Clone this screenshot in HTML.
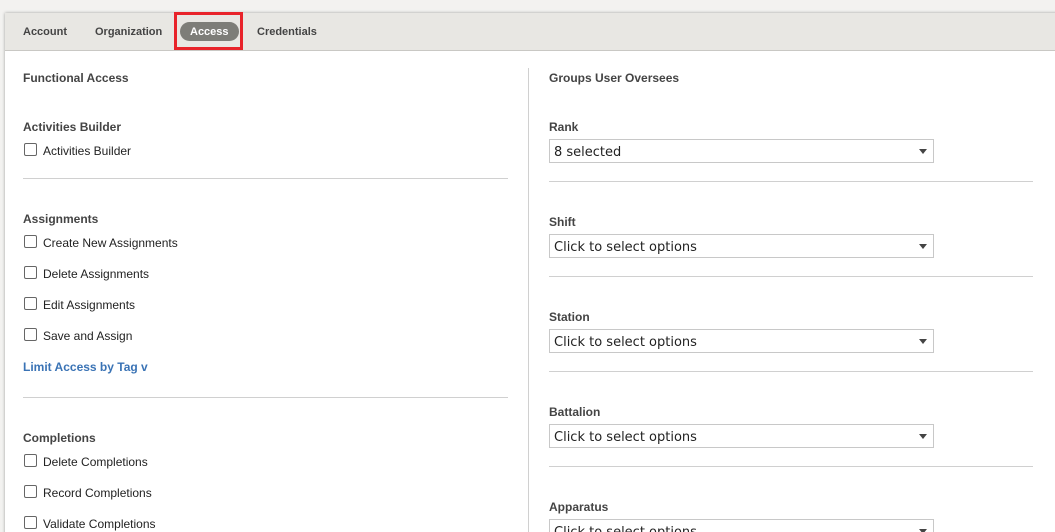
<!DOCTYPE html><html style="overflow:hidden"><head><style>
html,body{width:1055px;height:532px;overflow:hidden}
body{margin:0;background:#f3f2f0;font-family:"Liberation Sans",Arial,sans-serif;position:relative}
.card{position:absolute;left:5px;top:13px;width:1060px;height:530px;background:#fff;box-shadow:0 0 3px rgba(0,0,0,.35)}
.tabs{position:absolute;left:5px;top:13px;width:1060px;height:37px;background:#e8e7e3;border-bottom:1px solid #c9c8c4}
.t{position:absolute;top:26px;font-size:11px;font-weight:bold;color:#444}
.a{position:absolute}
.h{position:absolute;font-size:12px;font-weight:bold;color:#444;line-height:14px}
.c{position:absolute;left:24px;width:11px;height:11px;border:1px solid #666;border-radius:2px;background:#fff}
.l{position:absolute;left:43px;font-size:12px;color:#222;line-height:14px}
.hr{position:absolute;height:1px;background:#d0d0d0}
.s{position:absolute;left:549px;width:383px;height:22px;border:1px solid #c8c8c8;font-family:"DejaVu Sans",Verdana,sans-serif;font-size:13px;color:#222;line-height:25px;text-indent:4px}
.s:after{content:"";position:absolute;right:6px;top:9px;border-left:4px solid transparent;border-right:4px solid transparent;border-top:5px solid #444}
</style></head><body>
<div class="card"></div>
<div class="tabs"></div>
<div class="t" style="left:23px">Account</div>
<div class="t" style="left:95px">Organization</div>
<div class="a" style="left:174px;top:12px;width:63px;height:32px;border:3px solid #e8232a"></div>
<div class="a" style="left:180px;top:22px;width:59px;height:19px;border-radius:10px;background:#7d7d78"></div>
<div class="t" style="left:190px;color:#fff">Access</div>
<div class="t" style="left:257px">Credentials</div>
<div class="a" style="left:528px;top:68px;width:1px;height:470px;background:#d0d0d0"></div>

<div class="h" style="left:23px;top:71px">Functional Access</div>
<div class="h" style="left:23px;top:120px">Activities Builder</div>
<div class="c" style="top:143px"></div><div class="l" style="top:144px">Activities Builder</div>
<div class="hr" style="left:23px;width:485px;top:178px"></div>
<div class="h" style="left:23px;top:212px">Assignments</div>
<div class="c" style="top:235px"></div><div class="l" style="top:236px">Create New Assignments</div>
<div class="c" style="top:266px"></div><div class="l" style="top:267px">Delete Assignments</div>
<div class="c" style="top:297px"></div><div class="l" style="top:298px">Edit Assignments</div>
<div class="c" style="top:328px"></div><div class="l" style="top:329px">Save and Assign</div>
<div class="h" style="left:23px;top:360px;color:#3a73b5">Limit Access by Tag v</div>
<div class="hr" style="left:23px;width:485px;top:397px"></div>
<div class="h" style="left:23px;top:431px">Completions</div>
<div class="c" style="top:454px"></div><div class="l" style="top:455px">Delete Completions</div>
<div class="c" style="top:485px"></div><div class="l" style="top:486px">Record Completions</div>
<div class="c" style="top:516px"></div><div class="l" style="top:517px">Validate Completions</div>

<div class="h" style="left:549px;top:71px">Groups User Oversees</div>
<div class="h" style="left:549px;top:120px">Rank</div>
<div class="s" style="top:139px">8 selected</div>
<div class="hr" style="left:549px;width:484px;top:181px"></div>
<div class="h" style="left:549px;top:215px">Shift</div>
<div class="s" style="top:234px">Click to select options</div>
<div class="hr" style="left:549px;width:484px;top:276px"></div>
<div class="h" style="left:549px;top:310px">Station</div>
<div class="s" style="top:329px">Click to select options</div>
<div class="hr" style="left:549px;width:484px;top:371px"></div>
<div class="h" style="left:549px;top:405px">Battalion</div>
<div class="s" style="top:424px">Click to select options</div>
<div class="hr" style="left:549px;width:484px;top:466px"></div>
<div class="h" style="left:549px;top:500px">Apparatus</div>
<div class="s" style="top:519px">Click to select options</div>
</body></html>
